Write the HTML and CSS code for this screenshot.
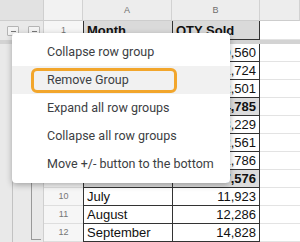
FILE: index.html
```html
<!DOCTYPE html>
<html lang="en">
<head>
    <meta charset="UTF-8">
    <title>Row groups</title>
    <link rel="stylesheet" href="styles.css">
</head>
<body>
    <div class="sheet">
        <!-- group gutter -->
        <div class="gutter">
            <div class="gutter-head"></div>
            <div class="gutter-row1">
                <span class="minus"></span>
                <span class="minus"></span>
            </div>
            <div class="frozen"></div>
            <div class="level1">
                <div class="level2"></div>
            </div>
        </div>

        <div class="grid">
            <div class="row head">
                <div class="num"></div>
                <div class="col a">A</div>
                <div class="col b">B</div>
                <div class="col c"></div>
            </div>
            <div class="row first">
                <div class="num">1</div>
                <div class="a title">Month</div>
                <div class="b title">QTY Sold</div>
                <div class="c"></div>
            </div>
            <div class="frozen"></div>
            <div class="row"><div class="num">2</div><div class="a">January</div><div class="b">10,560</div><div class="c"></div></div>
            <div class="row"><div class="num">3</div><div class="a">February</div><div class="b">11,724</div><div class="c"></div></div>
            <div class="row"><div class="num">4</div><div class="a">March</div><div class="b">12,501</div><div class="c"></div></div>
            <div class="row total"><div class="num">5</div><div class="a"></div><div class="b">34,785</div><div class="c"></div></div>
            <div class="row"><div class="num">6</div><div class="a">April</div><div class="b">13,229</div><div class="c"></div></div>
            <div class="row"><div class="num">7</div><div class="a">May</div><div class="b">12,561</div><div class="c"></div></div>
            <div class="row"><div class="num">8</div><div class="a">June</div><div class="b">11,786</div><div class="c"></div></div>
            <div class="row total"><div class="num">9</div><div class="a"></div><div class="b">37,576</div><div class="c"></div></div>
            <div class="row"><div class="num">10</div><div class="a">July</div><div class="b">11,923</div><div class="c"></div></div>
            <div class="row"><div class="num">11</div><div class="a">August</div><div class="b">12,286</div><div class="c"></div></div>
            <div class="row"><div class="num">12</div><div class="a">September</div><div class="b">14,828</div><div class="c"></div></div>
        </div>
    </div>

    <!-- context menu -->
    <div class="menu">
        <div class="item">Collapse row group</div>
        <div class="item hover">Remove Group</div>
        <div class="item">Expand all row groups</div>
        <div class="item">Collapse all row groups</div>
        <div class="item">Move +/- button to the bottom</div>
        <div class="mark"></div>
    </div>
</body>
</html>
```

FILE: styles.css
```css
body{
    margin: 0;
    width: 300px;
    height: 242px;
    overflow: hidden;
    font-family: "Liberation Sans", Arial, sans-serif;
    background: #fff;
}
.sheet{
    display: flex;
    height: 242px;
}
.gutter{
    width: 44px;
    flex: none;
    display: flex;
    flex-direction: column;
    background: #e9e9e9;
    border-right: 1px solid #cfcfcf;
    box-sizing: border-box;
}
.gutter-head{
    height: 21px;
    flex: none;
    background: #e2e2e2;
    border-bottom: 1px solid #cdcdcd;
    box-sizing: border-box;
}
.gutter-row1{
    height: 19px;
    flex: none;
    display: flex;
    gap: 9px;
    padding: 5px 0 0 7px;
    box-sizing: border-box;
}
.minus{
    width: 10px;
    height: 8px;
    border: 1px solid #b4b4b4;
    border-radius: 1px;
    background: #f3f3f3;
    display: flex;
    align-items: center;
    justify-content: center;
}
.minus::before{
    content: "";
    width: 5px;
    height: 1px;
    background: #777;
}
.frozen{
    height: 4px;
    flex: none;
    background: #d3d3d3;
}
.level1{
    flex: 1;
    margin-left: 12px;
    border-left: 1px solid #c2c2c2;
    display: flex;
    padding-bottom: 2px;
}
.level2{
    margin-left: 18px;
    width: 9px;
    border-left: 1px solid #999;
    border-bottom: 1px solid #999;
}
.grid{
    flex: 1;
    display: flex;
    flex-direction: column;
}
.row{
    display: flex;
    height: 18px;
    flex: none;
}
.row > div{
    box-sizing: border-box;
    font-size: 13px;
    line-height: 17px;
    white-space: nowrap;
    overflow: hidden;
}
.num{
    width: 39px;
    flex: none;
    background: #f6f6f6;
    border-bottom: 1px solid #dedede;
    color: #777;
    text-align: center;
    font-size: 9px !important;
}
.a{
    width: 89px;
    flex: none;
    padding: 0 3px;
    color: #111;
    border-left: 1px solid #333;
    border-bottom: 1px solid #333;
}
.b{
    width: 88px;
    flex: none;
    padding: 0 3px;
    color: #111;
    text-align: right;
    border-left: 1px solid #333;
    border-right: 1px solid #333;
    border-bottom: 1px solid #333;
}
.c{
    flex: 1;
    border-bottom: 1px solid #e3e3e3;
}
.head{
    height: 21px;
    background: #ededed;
}
.head > div{
    border: none;
    border-bottom: 1px solid #cdcdcd;
    border-right: 1px solid #d2d2d2;
    background: #ededed;
    color: #6f6f6f;
    font-size: 9px !important;
    line-height: 21px !important;
    text-align: center;
}
.head .num{
    background: #f2f2f2;
}
.first{
    height: 19px;
}
.first > div{
    line-height: 19px !important;
}
.title{
    font-weight: bold;
    text-align: left;
    background: #dadada;
}
.total .a,
.total .b{
    font-weight: bold;
    background: #dcdcdc;
}

/* menu over the sheet */
.menu{
    position: absolute;
    left: 12px;
    top: 33px;
    width: 218px;
    padding: 5px 0;
    background: #fff;
    border-radius: 4px;
    box-shadow: 0 2px 6px rgba(0, 0, 0, 0.3);
    font-family: Roboto, "Liberation Sans", sans-serif;
}
.item{
    height: 28px;
    line-height: 28px;
    padding-left: 35px;
    font-size: 12.5px;
    color: #3c4043;
    white-space: nowrap;
}
.hover{
    background: #f1f1f1;
}
.mark{
    position: absolute;
    left: 19px;
    top: 35px;
    width: 146px;
    height: 25px;
    box-sizing: border-box;
    border: 3px solid #f2a62c;
    border-radius: 6px;
}
```
